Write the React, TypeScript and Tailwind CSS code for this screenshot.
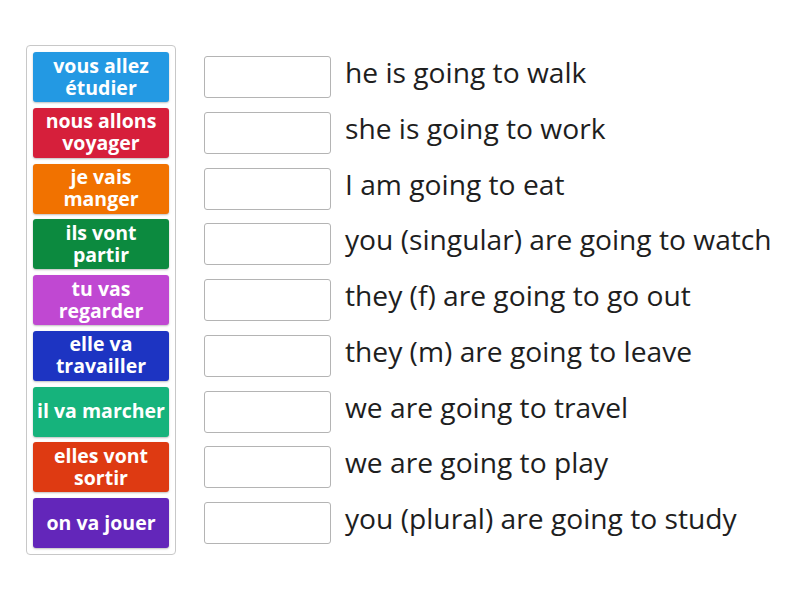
const tiles = [
  { text: "vous allez étudier", color: "bg-[#2399e3]" },
  { text: "nous allons voyager", color: "bg-[#d61f3b]" },
  { text: "je vais manger", color: "bg-[#f17200]" },
  { text: "ils vont partir", color: "bg-[#0c8a3f]" },
  { text: "tu vas regarder", color: "bg-[#c048d2]" },
  { text: "elle va travailler", color: "bg-[#1d34c2]" },
  { text: "il va marcher", color: "bg-[#16b37c]" },
  { text: "elles vont sortir", color: "bg-[#de3a12]" },
  { text: "on va jouer", color: "bg-[#6326ba]" },
];

const prompts = [
  "he is going to walk",
  "she is going to work",
  "I am going to eat",
  "you (singular) are going to watch",
  "they (f) are going to go out",
  "they (m) are going to leave",
  "we are going to travel",
  "we are going to play",
  "you (plural) are going to study",
];

export default function App() {
  return (
    <div
      className="w-[800px] h-[600px] bg-white flex items-start pt-[45px] pl-[26px]"
      style={{ fontFamily: "'Open Sans', sans-serif" }}
    >
      <div className="w-[150px] border border-[#c8c8c8] rounded-[4px] p-[6px] flex flex-col gap-[5.75px]">
        {tiles.map((t) => (
          <div
            key={t.text}
            className={`${t.color} h-[50px] rounded-[3px] flex items-center justify-center text-center text-white font-bold text-[19.5px] leading-[22px] px-[3px] pb-[1px] shadow-[0_1px_2px_rgba(0,0,0,0.25)]`}
          >
            {t.text}
          </div>
        ))}
      </div>
      <div className="flex flex-col gap-[5.75px] pt-[7px] ml-[28px]">
        {prompts.map((p) => (
          <div key={p} className="h-[50px] flex items-center">
            <div className="w-[127px] h-[42px] border border-[#b4b4b4] rounded-[3px] bg-white" />
            <span className="ml-[14px] pb-[10px] text-[28.2px] leading-[36px] text-[#1e1e1e] whitespace-nowrap">
              {p}
            </span>
          </div>
        ))}
      </div>
    </div>
  );
}
